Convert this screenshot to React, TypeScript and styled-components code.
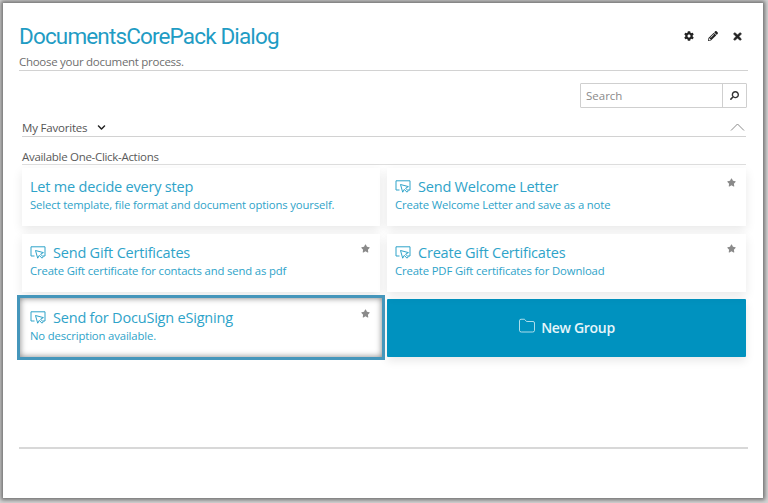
import React from "react";
import styled, { createGlobalStyle } from "styled-components";
import { FaChevronDown, FaCog, FaPencilAlt, FaSearch, FaStar, FaTimes } from "react-icons/fa";
import { Folder } from "lucide-react";

const Global = createGlobalStyle`
  html, body { margin: 0; padding: 0; background: #c9c9c9; }
  * { box-sizing: border-box; }
`;

const Page = styled.div`
  width: 768px;
  height: 503px;
  padding: 3px 5px 5px 3px;
  background: #d4d4d4;
  overflow: hidden;
  font-family: "Open Sans", "Noto Sans", sans-serif;
`;

const Dialog = styled.div`
  height: 100%;
  background: #fff;
  box-shadow: 0 0 4px 2px #707070;
  padding: 16px 15px 0 16px;
  display: flex;
  flex-direction: column;
`;

const Header = styled.header`
  display: flex;
  justify-content: space-between;
  border-bottom: 1px solid #d2d2d2;
  height: 52px;
`;

const Title = styled.h1`
  margin: 0;
  font-family: Roboto, "Open Sans", sans-serif;
  font-size: 22.5px;
  line-height: 35px;
  font-weight: 400;
  letter-spacing: -0.85px;
  color: #1f9cc4;
  white-space: nowrap;
`;

const Subtitle = styled.p`
  margin: 0;
  font-size: 11.5px;
  line-height: 16px;
  letter-spacing: -0.28px;
  color: #6e6e6e;
`;

const Tools = styled.div`
  display: flex;
  gap: 14px;
  color: #222;
  padding: 10px 5px 0 0;
  height: 24px;
  align-items: center;
  svg { width: 10px; height: 10px; display: block; }
  svg:last-child { width: 11px; height: 11px; stroke: #222; stroke-width: 30px; }
`;

const SearchRow = styled.div`
  display: flex;
  justify-content: flex-end;
  margin: 12px 1px 0 0;
`;

const SearchBox = styled.div`
  display: flex;
  width: 167px;
  height: 25px;
  border: 1px solid #cfcfcf;
  border-radius: 1px;
`;

const SearchInput = styled.div`
  flex: 1;
  font-size: 11.5px;
  line-height: 24px;
  padding-left: 5px;
  color: #8a8a8a;
  border-right: 1px solid #cfcfcf;
`;

const SearchButton = styled.div`
  width: 23px;
  display: flex;
  align-items: center;
  justify-content: center;
  color: #333;
  svg { width: 9px; height: 9px; transform: scaleX(-1); }
`;

const Section = styled.div`
  margin: 0 2px 0 3px;
`;

const FavRow = styled(Section)`
  display: flex;
  align-items: center;
  justify-content: space-between;
  height: 29px;
  padding-top: 11px;
  border-bottom: 1px solid #d2d2d2;
  font-size: 11.5px;
  letter-spacing: -0.2px;
  color: #555;
`;

const FavLabel = styled.div`
  display: flex;
  align-items: center;
  gap: 10px;
  svg { width: 9px; height: 9px; color: #222; }
`;

const Collapse = styled.svg`
  width: 15px;
  height: 8px;
  margin: 0 1px 2px 0;
`;

const AvailableLabel = styled(Section)`
  height: 28px;
  padding-top: 12px;
  border-bottom: 1px solid #dedede;
  font-size: 11.5px;
  line-height: 16px;
  letter-spacing: -0.3px;
  color: #5a5a5a;
`;

const Grid = styled(Section)`
  display: grid;
  grid-template-columns: 358px 359px;
  grid-auto-rows: 58px;
  column-gap: 7px;
  row-gap: 7.5px;
  margin-top: 3px;
`;

const Card = styled.div<{ $focused?: boolean }>`
  position: relative;
  background: #fff;
  padding: 8px 8px 0;
  box-shadow: 0 4px 10px rgba(0, 0, 0, 0.09);
  ${(p) =>
    p.$focused &&
    `
    box-shadow: none;
    &::after {
      content: "";
      position: absolute;
      top: -4px;
      left: -5px;
      right: -5px;
      bottom: -3px;
      border: 3px solid #4596bb;
      box-shadow: inset 0 0 6px rgba(0, 0, 0, 0.5);
      pointer-events: none;
    }
  `}
`;

const CardTitle = styled.div`
  display: flex;
  align-items: center;
  gap: 7px;
  font-size: 14.5px;
  line-height: 21px;
  letter-spacing: -0.2px;
  color: #2ea3c9;
`;

const CardText = styled.div`
  font-size: 11.3px;
  line-height: 16px;
  letter-spacing: -0.14px;
  color: #2ea3c9;
`;

const Favorite = styled.span`
  position: absolute;
  top: 10px;
  right: 10px;
  color: #8a8a8a;
  svg { width: 9px; height: 9px; display: block; }
`;

const NewGroup = styled.div`
  background: #0092bf;
  border-radius: 1px;
  box-shadow: 0 4px 10px rgba(0, 0, 0, 0.09);
  color: #e6f5fa;
  display: flex;
  align-items: center;
  justify-content: center;
  gap: 5px;
  padding-bottom: 2px;
  font-size: 14px;
  font-weight: 600;
  letter-spacing: -0.3px;
  svg { width: 18px; height: 18px; stroke-width: 1; margin-top: -3px; }
`;

const Footer = styled.div`
  margin-top: auto;
  margin-bottom: 49px;
  height: 2px;
  background: #d8d8d8;
`;

const ActionIcon = () => (
  <svg width="16" height="13" viewBox="0 0 16 13" fill="none" stroke="#2ea3c9" strokeWidth="1">
    <path d="M4.5 10H1V.8h14V10h-2" />
    <path d="M5.5 4.5l2.2 7.7 1.6-2.8 2.7 2.8 1.3-1.3-2.7-2.7 2.8-1.6z" />
  </svg>
);

const actions = [
  { title: "Let me decide every step", text: "Select template, file format and document options yourself.", plain: true },
  { title: "Send Welcome Letter", text: "Create Welcome Letter and save as a note" },
  { title: "Send Gift Certificates", text: "Create Gift certificate for contacts and send as pdf" },
  { title: "Create Gift Certificates", text: "Create PDF Gift certificates for Download" },
  { title: "Send for DocuSign eSigning", text: "No description available.", focused: true },
];

export default function App() {
  return (
    <Page>
      <Global />
      <Dialog>
        <Header>
          <div>
            <Title>DocumentsCorePack Dialog</Title>
            <Subtitle>Choose your document process.</Subtitle>
          </div>
          <Tools>
            <FaCog />
            <FaPencilAlt />
            <FaTimes />
          </Tools>
        </Header>
        <SearchRow>
          <SearchBox>
            <SearchInput>Search</SearchInput>
            <SearchButton><FaSearch /></SearchButton>
          </SearchBox>
        </SearchRow>
        <FavRow>
          <FavLabel>My Favorites <FaChevronDown /></FavLabel>
          <Collapse viewBox="0 0 15 8" fill="none" stroke="#8a8a8a"><path d="M1 7.5L7.5 1 14 7.5" /></Collapse>
        </FavRow>
        <AvailableLabel>Available One-Click-Actions</AvailableLabel>
        <Grid>
          {actions.map((a) => (
            <Card key={a.title} $focused={a.focused}>
              <CardTitle>
                {!a.plain && <ActionIcon />}
                {a.title}
              </CardTitle>
              <CardText>{a.text}</CardText>
              {!a.plain && <Favorite><FaStar /></Favorite>}
            </Card>
          ))}
          <NewGroup><Folder />New Group</NewGroup>
        </Grid>
        <Footer />
      </Dialog>
    </Page>
  );
}
